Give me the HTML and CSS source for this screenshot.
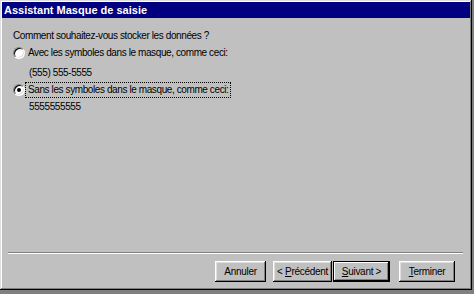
FILE: index.html
```html
<!DOCTYPE html>
<html lang="fr">
<head>
<meta charset="utf-8">
<title>Assistant Masque de saisie</title>
<link rel="stylesheet" href="styles.css">
</head>
<body>
<div class="window">
  <div class="titlebar">Assistant Masque de saisie</div>
  <div class="content">
    <p class="question">Comment souhaitez-vous stocker les données ?</p>
    <div class="option">
      <span class="radio"></span>
      <span class="label">Avec les symboles dans le masque, comme ceci:</span>
    </div>
    <div class="sample sample-first">(555) 555-5555</div>
    <div class="option">
      <span class="radio checked"></span>
      <span class="label focus">Sans les symboles dans le masque, comme ceci:</span>
    </div>
    <div class="sample sample-last">5555555555</div>
  </div>
  <div class="separator"></div>
  <div class="buttons">
    <button class="btn btn-cancel">Annuler</button>
    <button class="btn btn-prev">&lt; <u>P</u>récédent</button>
    <button class="btn btn-next default"><u>S</u>uivant &gt;</button>
    <button class="btn btn-finish"><u>T</u>erminer</button>
  </div>
</div>
</body>
</html>
```

FILE: styles.css
```css
html, body {
  margin: 0;
  padding: 0;
}
body {
  width: 474px;
  height: 294px;
  background: #808080;
  font-family: "Liberation Sans", Arial, sans-serif;
  font-size: 10px;
  letter-spacing: -0.4px;
  color: #000;
  overflow: hidden;
}
.window {
  box-sizing: border-box;
  width: 472px;
  height: 290px;
  background: #c0c0c0;
  padding: 2px;
  box-shadow: inset -1px -1px 0 #000, inset 1px 1px 0 #dfdfdf, inset -2px -2px 0 #808080, inset 2px 2px 0 #fff;
  display: flex;
  flex-direction: column;
}
.titlebar {
  height: 16px;
  background: #000080;
  color: #fff;
  font-weight: bold;
  font-size: 11px;
  letter-spacing: 0;
  line-height: 16px;
  padding-left: 2px;
}
.content {
  flex: 1;
  padding: 11px 0 0 11px;
}
.question {
  margin: 0 0 2px 0;
  line-height: 14px;
}
.option {
  display: flex;
  align-items: center;
  height: 16px;
}
.radio {
  box-sizing: border-box;
  width: 12px;
  height: 12px;
  border-radius: 50%;
  background: #fff;
  border: 1px solid;
  border-color: #808080 #fff #fff #808080;
  box-shadow: inset 1px 1px 0 #000, inset -1px -1px 0 #dfdfdf;
  margin-right: 0;
  position: relative;
}
.radio.checked::after {
  content: "";
  position: absolute;
  left: 3px;
  top: 3px;
  width: 4px;
  height: 4px;
  border-radius: 50%;
  background: #000;
}
.label {
  padding: 1px 2px;
  line-height: 12px;
  border: 1px dotted transparent;
  white-space: nowrap;
}
.label.focus {
  border-color: #000;
}
.sample {
  padding-left: 16px;
  line-height: 14px;
}
.sample-first {
  margin: 5px 0 2px 0;
}
.sample-last {
  margin: 2px 0 0 0;
}
.separator {
  margin: 0 7px 0 6px;
  height: 0;
  border-top: 1px solid #808080;
  border-bottom: 1px solid #fff;
}
.buttons {
  display: flex;
  justify-content: flex-end;
  padding: 7px 15px 6px 0;
}
.btn {
  box-sizing: border-box;
  height: 21px;
  font-family: "Liberation Sans", Arial, sans-serif;
  font-size: 10px;
  letter-spacing: -0.3px;
  white-space: nowrap;
  color: #000;
  background: #c0c0c0;
  border: none;
  padding: 0;
  box-shadow: inset -1px -1px 0 #000, inset 1px 1px 0 #fff, inset -2px -2px 0 #808080, inset 2px 2px 0 #dfdfdf;
}
.btn u {
  text-decoration: underline;
}
.btn-cancel { width: 51px; margin-right: 7px; }
.btn-prev { width: 59px; margin-right: 1px; }
.btn-next { width: 57px; margin-right: 9px; }
.btn-finish { width: 56px; }
.btn.default {
  box-shadow: inset 0 0 0 1px #000, inset -2px -2px 0 #000, inset 2px 2px 0 #fff, inset -3px -3px 0 #808080;
}
```
